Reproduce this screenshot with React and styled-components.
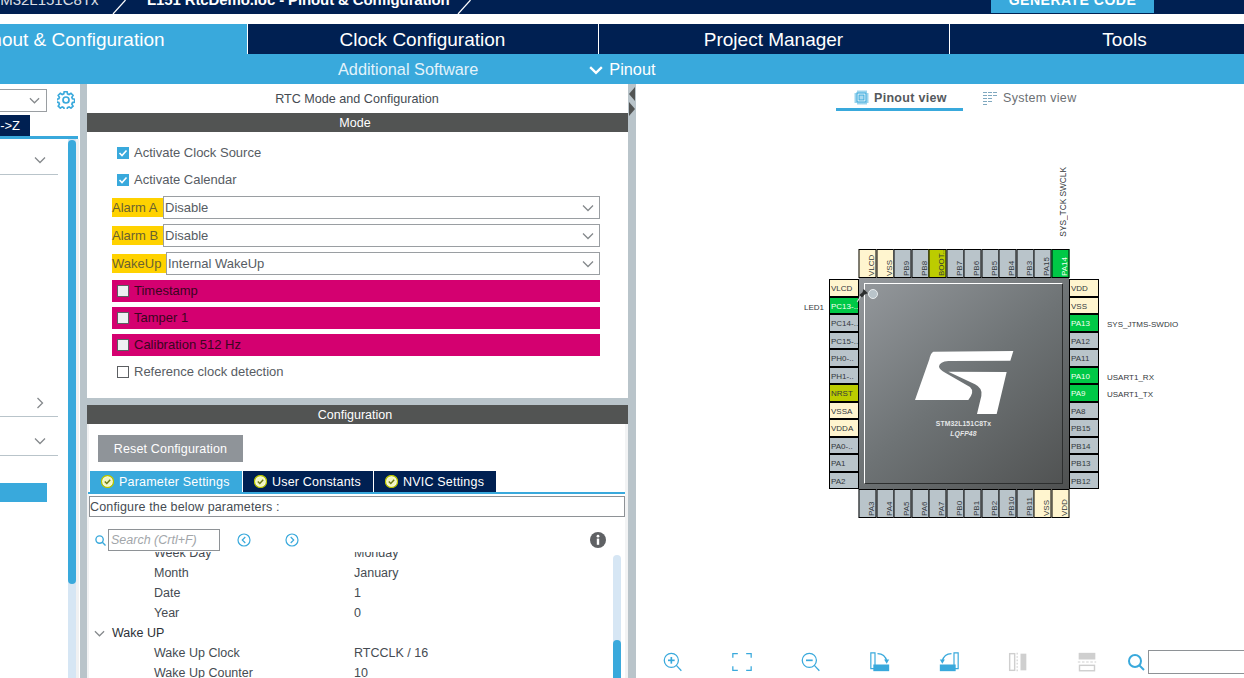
import React from 'react';
import styled, { createGlobalStyle } from 'styled-components';

const NAVY = '#002052';
const BLUE = '#39a9dc';
const GUTTER = '#b9c4ca';
const DARK = '#525453';

const Global = createGlobalStyle`
  html, body { margin: 0; padding: 0; background: #fff; }
  body { font-family: "Liberation Sans", Arial, sans-serif; color: #454b52; }
  * { box-sizing: border-box; }
`;

const Page = styled.div`
  width: 1244px; height: 678px; overflow: hidden; display: flex; flex-direction: column;
`;

/* ---------- header ---------- */
const TopBar = styled.div`
  height: 14px; flex: none; background: ${NAVY}; display: flex; overflow: hidden; position: relative;
`;
const Crumb = styled.div`
  flex: none; width: ${p => p.$w}px; margin-left: ${p => p.$ml || 0}px;
  margin-top: -9px; height: 23px; line-height: 17px; color: #fff; white-space: nowrap; font-size: 15px;
  font-weight: ${p => (p.$bold ? 700 : 400)}; opacity: ${p => (p.$bold ? 1 : 0.85)};
  letter-spacing: ${p => (p.$bold ? '-0.12px' : '0')};
`;
const CrumbSlash = styled.svg`
  flex: none; width: 16px; height: 14px; display: block; margin-left: ${p => p.$ml}px;
`;
const Generate = styled.div`
  position: absolute; left: 991px; top: -9px; width: 163px; height: 22px; background: ${BLUE}; color: #fff;
  font-size: 14px; font-weight: 700; text-align: center; line-height: 18px; letter-spacing: 0.5px;
`;
const Spacer = styled.div`
  height: 10px; flex: none; background: #fff;
`;
const Tabs = styled.div`
  height: 30px; flex: none; display: flex; margin-left: -103px; width: 1452px;
`;
const Tab = styled.div`
  flex: none; width: 351px; height: 30px; background: ${p => (p.$active ? BLUE : NAVY)}; color: #fff;
  border-right: 1px solid #fff; font-size: 19px; line-height: 31px; text-align: center; padding-right: ${p => (p.$active ? 5 : 1)}px;
`;
const SubBar = styled.div`
  height: 30px; flex: none; background: ${BLUE}; display: flex; align-items: center;
  padding: 1px 0 0 338px; font-size: 16.3px; gap: 111px;
`;
const SubItem = styled.div`
  display: flex; align-items: center; gap: 6px; color: ${p => (p.$on ? '#fff' : '#e3f3fb')};
`;

/* ---------- body ---------- */
const Main = styled.div`
  flex: 1; min-height: 0; display: flex;
`;
const LeftPanel = styled.div`
  flex: none; width: 80px; position: relative; display: flex; flex-direction: column; background: #fff; overflow: hidden;
`;
const LeftTop = styled.div`
  display: flex; align-items: center; height: 31px; padding-top: 1px;
`;
const MiniSelect = styled.div`
  width: 47px; height: 23px; border: 1px solid #9a9ea2; border-left: none; display: flex; align-items: center;
  justify-content: flex-end; padding-right: 6px;
`;
const Gear = styled.svg`
  width: 18px; height: 18px; margin-left: 10px; flex: none;
`;
const SortBtn = styled.div`
  width: 30px; height: 21px; background: ${NAVY}; color: #fff; font-size: 13px; line-height: 21px; text-align: right; padding-right: 10px;
`;
const BlueLine = styled.div`
  height: 3px; width: 78px; background: ${BLUE}; flex: none;
`;
const LeftList = styled.div`
  flex: 1; display: flex; min-height: 0;
`;
const Cats = styled.div`
  width: 58px; flex: none; display: flex; flex-direction: column;
`;
const Cat = styled.div`
  height: ${p => p.$h}px; flex: none; border-bottom: 1px solid ${GUTTER}; display: flex;
  align-items: flex-end; justify-content: flex-end; padding: 0 12px ${p => p.$pb || 8}px 0;
`;
const SoftBar = styled.div`
  width: 47px; height: 19px; background: ${BLUE}; margin-top: 27px; flex: none;
`;
const Scroll = styled.div`
  width: 11px; flex: none; margin-left: 10px; background: #d6e6f4; border-right: 3px solid #f0f1f2; position: relative;
`;
const ScrollThumb = styled.div`
  position: absolute; left: 0; right: 0; top: ${p => p.$top}px; height: ${p => p.$h}px; background: ${BLUE}; border-radius: 4px;
`;
const Gutter = styled.div`
  flex: none; width: ${p => p.$w}px; background: ${GUTTER}; position: relative;
`;
const HandleMark = styled.div`
  position: absolute; left: 1px; top: ${p => p.$top}px; width: 0; height: 0;
  border-top: 7px solid transparent; border-bottom: 7px solid transparent;
  ${p => (p.$right ? 'border-left: 6px solid #525453;' : 'border-right: 6px solid #525453;')}
`;
const Center = styled.div`
  flex: none; width: 541px; display: flex; flex-direction: column; background: #fff;
`;
const PanelTitle = styled.div`
  height: 29px; line-height: 30px; text-align: center; font-size: 12.6px; color: #454b52; padding-right: 1px;
`;
const Band = styled.div`
  height: 19px; background: ${DARK}; color: #fff; line-height: 20px; text-align: center; font-size: 12.5px; flex: none; padding-right: 5px;
`;
const ModeBody = styled.div`
  height: 266px; flex: none; padding: 7px 28px 0 25px; display: flex; flex-direction: column;
`;
const CheckRow = styled.div`
  height: 27px; flex: none; display: flex; align-items: center; padding-left: 5px; gap: 5px; font-size: 13px; color: #575c63;
  margin-top: ${p => p.$mt || 0}px;
`;
const Box = styled.span`
  width: 12px; height: 12px; flex: none; display: flex; align-items: center; justify-content: center;
  background: ${p => (p.$on ? BLUE : p.$light ? '#eef0f3' : '#fff')};
  border: ${p => (p.$on ? 'none' : '1px solid #5c5f62')};
`;
const SelectRow = styled.div`
  height: 23px; flex: none; display: flex; align-items: center; margin-top: ${p => p.$mt || 5}px; font-size: 13px;
`;
const Warn = styled.div`
  flex: none; height: 19px; line-height: 19px; background: #ffd200; color: #6b6230; width: ${p => p.$w}px; white-space: nowrap;
`;
const Select = styled.div`
  flex: 1; height: 23px; border: 1px solid #9a9ea2; display: flex; align-items: center; padding: 0 5px 0 1px; justify-content: space-between; color: #575c63;
`;
const ErrRow = styled.div`
  height: 22px; flex: none; margin-top: 5px; background: #d40070; color: #3a0620; display: flex; align-items: center;
  padding-left: 5px; gap: 5px; font-size: 13px;
`;
const ErrLabel = styled.span`
  line-height: 15px; margin-top: -2px;
`;
const GapRow = styled.div`
  height: 7px; flex: none; background: ${GUTTER};
`;
const Config = styled.div`
  flex: 1; min-height: 0; display: flex; flex-direction: column; border-left: 2px solid #f2f3f4; border-right: 3px solid #f2f3f4;
`;
const ConfigBand = styled(Band)`
  margin: 0 -3px 0 -2px;
`;
const Reset = styled.div`
  width: 145px; height: 27px; margin: 11px 0 0 9px; background: #8f9499; color: #fff; text-align: center; line-height: 28px; font-size: 12.5px; letter-spacing: 0.15px;
`;
const SubTabs = styled.div`
  display: flex; height: 21px; margin: 9px 0 0 1px; flex: none; gap: 1px;
`;
const SubTab = styled.div`
  width: ${p => p.$w}px; height: 21px; background: ${p => (p.$active ? BLUE : NAVY)}; color: #fff; font-size: 12.5px; letter-spacing: 0.2px;
  display: flex; align-items: center; gap: 5px; padding-left: 11px; flex: none;
`;
const OkDot = styled.svg`
  width: 13px; height: 13px; flex: none;
`;
const SubLine = styled.div`
  height: 2px; background: ${BLUE}; flex: none; margin-left: -1px;
`;
const ParamBox = styled.div`
  height: 21px; margin: 2px 0 0 0; width: 536px; border: 1px solid #8e9296; font-size: 12.5px; letter-spacing: 0.15px; line-height: 20px; color: #454b52; flex: none;
`;
const SearchRow = styled.div`
  height: 22px; display: flex; align-items: center; margin-top: 12px; padding-left: 6px; flex: none; position: relative;
`;
const SearchInput = styled.div`
  width: 112px; height: 22px; margin-left: 2px; border: 1px solid #8e9296; color: #a2a6aa; font-style: italic; font-size: 12.5px; line-height: 20px; padding-left: 2px; white-space: nowrap;
`;
const RoundBtn = styled.svg`
  width: 14px; height: 14px; flex: none; margin-left: ${p => p.$ml}px;
`;
const Info = styled.svg`
  width: 16px; height: 16px; margin-left: 291px; flex: none;
`;
const ParamArea = styled.div`
  flex: 1; min-height: 0; position: relative; overflow: hidden; margin-top: 1px;
`;
const ParamRow = styled.div`
  height: 20px; line-height: 20px; display: flex; font-size: 12.5px; color: #454b52; padding-left: ${p => (p.$head ? 5 : 65)}px; align-items: center;
  margin-top: ${p => p.$mt || 0}px;
`;
const ParamName = styled.div`
  width: ${p => (p.$head ? 'auto' : '200px')}; flex: none; display: flex; align-items: center; gap: 7px; color: ${p => (p.$head ? '#2c3036' : '#454b52')};
`;
const PScroll = styled.div`
  position: absolute; left: 524px; top: 3px; bottom: 0; width: 8px; background: #d6e6f4; border-radius: 4px 4px 0 0;
`;
const PThumb = styled.div`
  position: absolute; left: 0; right: 0; top: 85px; bottom: 0; background: ${BLUE}; border-radius: 4px 4px 0 0;
`;

/* ---------- right ---------- */
const Right = styled.div`
  flex: 1; min-width: 0; display: flex; flex-direction: column; position: relative; overflow: hidden;
`;
const ViewTabs = styled.div`
  display: flex; height: 27px; flex: none; margin-left: 200px;
`;
const ViewTab = styled.div`
  width: ${p => p.$w}px; height: 27px; flex: none; display: flex; align-items: center; gap: 5px; padding-left: ${p => p.$pl}px;
  padding-top: ${p => (p.$on ? 3 : 1)}px;
  border-bottom: ${p => (p.$on ? `3px solid ${BLUE}` : 'none')}; font-size: 12.5px; font-weight: ${p => (p.$on ? 700 : 400)}; color: ${p => (p.$on ? '#55595d' : '#6c7074')}; letter-spacing: 0.3px;
`;
const ViewIcon = styled.svg`
  width: 15px; height: 15px; flex: none;
`;
const Chip = styled.div`
  display: grid; grid-template-columns: 30px 210px 30px; grid-template-rows: 29px 211px 29px; margin: 138px 0 0 193px; width: 270px; flex: none;
`;
const PinRow = styled.div`
  grid-column: 2; display: flex; grid-row: ${p => p.$row};
`;
const PinCol = styled.div`
  grid-row: 2; grid-column: ${p => p.$col}; display: flex; flex-direction: column; padding-top: 1px;
`;
const pinColors = { g: ['#b9c4ca', '#33383c'], y: ['#fff5cf', '#33383c'], e: ['#00c846', '#f4fff4'], o: ['#bccc00', '#33383c'] };
const VPin = styled.div`
  flex: none; width: 17.5px; height: 29px; border: 1px solid #000; background: ${p => pinColors[p.$c][0]}; color: ${p => pinColors[p.$c][1]};
  font-size: 8px; writing-mode: vertical-rl; transform: rotate(180deg); white-space: nowrap; overflow: hidden; line-height: 15px; padding: 1px 3px 0 0; position: relative;
`;
const VPinWrap = styled.div`
  flex: none; width: 17.5px; height: 29px; position: relative;
`;
const HPin = styled.div`
  flex: none; width: 30px; height: 17.5px; border: 1px solid #000; background: ${p => pinColors[p.$c][0]}; color: ${p => pinColors[p.$c][1]};
  font-size: 8px; line-height: 18px; white-space: nowrap; overflow: hidden; padding-left: 1px;
`;
const HPinWrap = styled.div`
  flex: none; height: 17.5px; position: relative;
`;
const SignalH = styled.div`
  position: absolute; top: 5px; font-size: 8px; line-height: 12px; color: #33383c; white-space: nowrap;
  ${p => (p.$left ? 'right: 35px;' : 'left: 38px;')}
`;
const SignalV = styled.div`
  position: absolute; bottom: 41px; left: 5px; font-size: 8.3px; line-height: 12px; color: #33383c; white-space: nowrap; writing-mode: vertical-rl; transform: rotate(180deg);
`;
const Body = styled.div`
  grid-row: 2; grid-column: 2; background: linear-gradient(140deg, #95999d 0%, #6e7375 50%, #4f5151 100%); padding: 5px 6px 5px 5px; position: relative;
`;
const BodyInner = styled.div`
  height: 100%; border-left: 1px solid #fff; border-top: 1px solid #fff; border-right: 1px solid #2d2f2f; border-bottom: 1px solid #2d2f2f;
  display: flex; flex-direction: column; align-items: center; padding-top: 67px; color: #e4e6e7; font-size: 6.8px; font-weight: 700; letter-spacing: 0.1px;
`;
const Logo = styled.svg`
  width: 100px; height: 65px; flex: none; margin-left: 3px;
`;
const ChipName = styled.div`
  margin-top: 3px; line-height: 9px; white-space: nowrap;
`;
const ChipPkg = styled.div`
  margin-top: 1px; font-style: italic; line-height: 9px;
`;
const Dot = styled.div`
  position: absolute; left: 9px; top: 11px; width: 10px; height: 10px; border-radius: 50%; background: #b9c4ca; border: 1px solid #e8ecee;
`;
const Pushpin = styled.svg`
  position: absolute; left: -4px; top: 10px; width: 14px; height: 16px;
`;
const Toolbar = styled.div`
  margin-top: auto; height: 30px; flex: none; margin-bottom: 1px; display: flex; align-items: center; padding-left: 27px;
`;
const ToolIcon = styled.svg`
  width: 20px; height: 20px; flex: none; margin-right: ${p => p.$mr || 49}px;
`;
const SmallSearch = styled.svg`
  width: 18px; height: 18px; flex: none; margin-right: 3px;
`;
const ToolInput = styled.div`
  width: 100px; height: 24px; border: 1px solid #8e9296; flex: none;
`;

const Chev = ({ dir = 'down', size = 12, color = '#85898c', w = 1.3 }) => (
  <svg width={size} height={size} viewBox="0 0 12 12" style={{ flex: 'none', display: 'block' }}>
    <path d={dir === 'down' ? 'M1 3.5 L6 8.5 L11 3.5' : 'M3.5 1 L8.5 6 L3.5 11'} fill="none" stroke={color} strokeWidth={w} />
  </svg>
);
const Tick = () => (
  <svg width="10" height="10" viewBox="0 0 10 10"><path d="M1.5 5 L4 7.5 L8.5 2.5" fill="none" stroke="#fff" strokeWidth="1.6" /></svg>
);
const Ok = () => (
  <OkDot viewBox="0 0 13 13">
    <circle cx="6.5" cy="6.5" r="6" fill="#fff" stroke="#b7c400" strokeWidth="1.4" />
    <circle cx="6.5" cy="6.5" r="4.6" fill="#f2f6c2" />
    <path d="M3.8 6.5 L5.8 8.5 L9.2 4.8" fill="none" stroke="#6d7a12" strokeWidth="1.4" />
  </OkDot>
);
const Mag = ({ plus, minus }) => (
  <ToolIcon viewBox="0 0 24 24">
    <circle cx="10" cy="10" r="8.5" fill="none" stroke={BLUE} strokeWidth="1.5" />
    <path d="M16 16 L22 22.5" stroke={BLUE} strokeWidth="1.5" />
    {(plus || minus) && <path d="M6 10 H14" stroke={BLUE} strokeWidth="2" />}
    {plus && <path d="M10 6 V14" stroke={BLUE} strokeWidth="2" />}
  </ToolIcon>
);

const topPins = [['VLCD','y'],['VSS','y'],['PB9','g'],['PB8','g'],['BOOT..','o'],['PB7','g'],['PB6','g'],['PB5','g'],['PB4','g'],['PB3','g'],['PA15','g'],['PA14','e','SYS_TCK SWCLK']];
const botPins = [['PA3','g'],['PA4','g'],['PA5','g'],['PA6','g'],['PA7','g'],['PB0','g'],['PB1','g'],['PB2','g'],['PB10','g'],['PB11','g'],['VSS','y'],['VDD','y']];
const leftPins = [['VLCD','y'],['PC13-..','e','LED1'],['PC14-..','g'],['PC15-..','g'],['PH0-..','g'],['PH1-..','g'],['NRST','o'],['VSSA','y'],['VDDA','y'],['PA0-..','g'],['PA1','g'],['PA2','g']];
const rightPins = [['VDD','y'],['VSS','y'],['PA13','e','SYS_JTMS-SWDIO'],['PA12','g'],['PA11','g'],['PA10','e','USART1_RX'],['PA9','e','USART1_TX'],['PA8','g'],['PB15','g'],['PB14','g'],['PB13','g'],['PB12','g']];

export default function App() {
  return (
    <Page>
      <Global />
      <TopBar>
        <Crumb $w={118} $ml={-19}>STM32L151C8Tx</Crumb>
        <CrumbSlash $ml={13} viewBox="0 0 16 14"><path d="M1 14 L13.5 0" stroke="#fff" strokeWidth="1.2" /></CrumbSlash>
        <Crumb $w={303} $ml={19} $bold>L151 RtcDemo.ioc - Pinout &amp; Configuration</Crumb>
        <CrumbSlash $ml={7} viewBox="0 0 16 14"><path d="M1 14 L13.5 0" stroke="#fff" strokeWidth="1.2" /></CrumbSlash>
        <Generate>GENERATE CODE</Generate>
      </TopBar>
      <Spacer />
      <Tabs>
        <Tab $active>Pinout &amp; Configuration</Tab>
        <Tab>Clock Configuration</Tab>
        <Tab>Project Manager</Tab>
        <Tab>Tools</Tab>
      </Tabs>
      <SubBar>
        <SubItem>Additional Software</SubItem>
        <SubItem $on><Chev size={14} color="#fff" w={2} />Pinout</SubItem>
      </SubBar>
      <Main>
        <LeftPanel>
          <LeftTop>
            <MiniSelect><Chev size={11} /></MiniSelect>
            <Gear viewBox="0 0 24 24">
              <path d="M10 1.5 h4 l.6 3 2.2.9 2.6-1.7 2.9 2.9-1.7 2.6.9 2.2 3 .6 v4 l-3 .6-.9 2.2 1.7 2.6-2.9 2.9-2.6-1.7-2.2.9-.6 3 h-4 l-.6-3-2.2-.9-2.6 1.7-2.9-2.9 1.7-2.6-.9-2.2-3-.6 v-4 l3-.6.9-2.2-1.7-2.6 2.9-2.9 2.6 1.7 2.2-.9z" transform="translate(0 -.5) scale(.96)" fill="none" stroke={BLUE} strokeWidth="2.3" />
              <circle cx="12" cy="12" r="4" fill="none" stroke={BLUE} strokeWidth="2.3" />
            </Gear>
          </LeftTop>
          <SortBtn>-&gt;Z</SortBtn>
          <BlueLine />
          <LeftList>
            <Cats>
              <Cat $h={36}><Chev /></Cat>
              <Cat $h={242} $pb={7}><Chev dir="right" /></Cat>
              <Cat $h={39}><Chev /></Cat>
              <SoftBar />
            </Cats>
            <Scroll><ScrollThumb $top={1} $h={444} /></Scroll>
          </LeftList>
        </LeftPanel>
        <Gutter $w={7} />
        <Center>
          <PanelTitle>RTC Mode and Configuration</PanelTitle>
          <Band>Mode</Band>
          <ModeBody>
            <CheckRow><Box $on><Tick /></Box>Activate Clock Source</CheckRow>
            <CheckRow><Box $on><Tick /></Box>Activate Calendar</CheckRow>
            <SelectRow $mt={3}><Warn $w={51}>Alarm A</Warn><Select>Disable<Chev /></Select></SelectRow>
            <SelectRow><Warn $w={51}>Alarm B</Warn><Select>Disable<Chev /></Select></SelectRow>
            <SelectRow><Warn $w={54}>WakeUp</Warn><Select>Internal WakeUp<Chev /></Select></SelectRow>
            <ErrRow><Box $light /><ErrLabel>Timestamp</ErrLabel></ErrRow>
            <ErrRow><Box $light /><ErrLabel>Tamper 1</ErrLabel></ErrRow>
            <ErrRow><Box $light /><ErrLabel>Calibration 512 Hz</ErrLabel></ErrRow>
            <CheckRow $mt={2}><Box />Reference clock detection</CheckRow>
          </ModeBody>
          <GapRow />
          <Config>
            <ConfigBand>Configuration</ConfigBand>
            <Reset>Reset Configuration</Reset>
            <SubTabs>
              <SubTab $active $w={152}><Ok />Parameter Settings</SubTab>
              <SubTab $w={130}><Ok />User Constants</SubTab>
              <SubTab $w={122}><Ok />NVIC Settings</SubTab>
            </SubTabs>
            <SubLine />
            <ParamBox>Configure the below parameters :</ParamBox>
            <SearchRow>
              <svg width="11" height="11" viewBox="0 0 12 12" style={{ flex: 'none' }}>
                <circle cx="5" cy="5" r="4" fill="none" stroke={BLUE} strokeWidth="1.5" /><path d="M8 8 L11.5 11.5" stroke={BLUE} strokeWidth="1.5" />
              </svg>
              <SearchInput>Search (Crtl+F)</SearchInput>
              <RoundBtn $ml={17} viewBox="0 0 14 14"><circle cx="7" cy="7" r="6" fill="none" stroke={BLUE} strokeWidth="1.2" /><path d="M8.3 4 L5.3 7 L8.3 10" fill="none" stroke={BLUE} strokeWidth="1.2" /></RoundBtn>
              <RoundBtn $ml={34} viewBox="0 0 14 14"><circle cx="7" cy="7" r="6" fill="none" stroke={BLUE} strokeWidth="1.2" /><path d="M5.7 4 L8.7 7 L5.7 10" fill="none" stroke={BLUE} strokeWidth="1.2" /></RoundBtn>
              <Info viewBox="0 0 16 16"><circle cx="8" cy="8" r="8" fill="#5f6164" /><rect x="6.8" y="6.6" width="2.4" height="6.2" fill="#fff" /><circle cx="8" cy="4.2" r="1.4" fill="#fff" /></Info>
            </SearchRow>
            <ParamArea>
              <ParamRow $mt={-9}><ParamName>Week Day</ParamName>Monday</ParamRow>
              <ParamRow><ParamName>Month</ParamName>January</ParamRow>
              <ParamRow><ParamName>Date</ParamName>1</ParamRow>
              <ParamRow><ParamName>Year</ParamName>0</ParamRow>
              <ParamRow $head><ParamName $head><Chev size={11} />Wake UP</ParamName></ParamRow>
              <ParamRow><ParamName>Wake Up Clock</ParamName>RTCCLK / 16</ParamRow>
              <ParamRow><ParamName>Wake Up Counter</ParamName>10</ParamRow>
              <PScroll><PThumb /></PScroll>
            </ParamArea>
          </Config>
        </Center>
        <Gutter $w={8}>
          <HandleMark $top={3} />
          <HandleMark $top={18} $right />
        </Gutter>
        <Right>
          <ViewTabs>
            <ViewTab $on $w={127} $pl={18}>
              <ViewIcon viewBox="0 0 15 15">
                <rect x="3" y="3" width="9" height="9" fill="none" stroke={BLUE} strokeWidth="1.2" /><rect x="5" y="5" width="5" height="5" fill="#a9d9f0" stroke={BLUE} />
                <path d="M4 0.5V2.5M6 0.5V2.5M8 0.5V2.5M10 0.5V2.5M12 .5V2.5M4 12.5V14.5M6 12.5V14.5M8 12.5V14.5M10 12.5V14.5M12 12.5V14.5M.5 4H2.5M.5 6H2.5M.5 8H2.5M.5 10H2.5M.5 12H2.5M12.5 4H14.5M12.5 6H14.5M12.5 8H14.5M12.5 10H14.5M12.5 12H14.5" stroke={BLUE} strokeWidth="1" />
              </ViewIcon>
              Pinout view
            </ViewTab>
            <ViewTab $w={115} $pl={20}>
              <ViewIcon viewBox="0 0 15 15">
                <path d="M0 1.5H4M5 1.5H9M10 1.5H14M0 4.5H4M5 4.5H9M10 4.5H14M0 7.5H4M5 7.5H9M0 10.5H4M5 10.5H9M0 13.5H4" stroke="#7fa8bf" strokeWidth="1.2" />
              </ViewIcon>
              System view
            </ViewTab>
          </ViewTabs>
          <Chip>
            <PinRow $row={1}>
              {topPins.map(([n, c, s]) => (
                <VPinWrap key={n}>
                  {s && <SignalV>{s}</SignalV>}
                  <VPin $c={c}>{n}</VPin>
                </VPinWrap>
              ))}
            </PinRow>
            <PinCol $col={1}>
              {leftPins.map(([n, c, s]) => (
                <HPinWrap key={n}>
                  {s && <SignalH $left>{s}</SignalH>}
                  <HPin $c={c}>{n}</HPin>
                </HPinWrap>
              ))}
            </PinCol>
            <Body>
              <BodyInner>
                <Logo viewBox="0 0 300 195">
                  <path d="M55 2 L295 0 L286 29 L100 30 Q74 32 72 46 Q72 56 92 66 L165 108 Q180 122 160 147 L0 147 L43 25 Q47 6 55 2 Z" fill="#fff" />
                  <path d="M100 62 L275 63 L245 189 L186 189 L199 135 Q204 112 180 100 Z" fill="#fff" />
                </Logo>
                <ChipName>STM32L151C8Tx</ChipName>
                <ChipPkg>LQFP48</ChipPkg>
              </BodyInner>
              <Dot />
              <Pushpin viewBox="0 0 13 15">
                <path d="M8 1 L12 5 L9 6 L6.5 9 L4 6.5 L7 4 Z" fill="#2b2d2e" /><path d="M5 8 L2 13" stroke="#d8dadb" strokeWidth="1" />
              </Pushpin>
            </Body>
            <PinCol $col={3}>
              {rightPins.map(([n, c, s]) => (
                <HPinWrap key={n}>
                  <HPin $c={c}>{n}</HPin>
                  {s && <SignalH>{s}</SignalH>}
                </HPinWrap>
              ))}
            </PinCol>
            <PinRow $row={3}>
              {botPins.map(([n, c]) => (
                <VPinWrap key={n}><VPin $c={c}>{n}</VPin></VPinWrap>
              ))}
            </PinRow>
          </Chip>
          <Toolbar>
            <Mag plus />
            <ToolIcon viewBox="0 0 24 24"><path d="M1 7V2H7M17 2H23V7M23 17V22H17M7 22H1V17" fill="none" stroke={BLUE} strokeWidth="1.5" /></ToolIcon>
            <Mag minus />
            <ToolIcon viewBox="0 0 24 24"><path d="M5 20H1V1H6V20" fill="none" stroke={BLUE} strokeWidth="1.4" /><rect x="4" y="15" width="19" height="8" fill={BLUE} /><path d="M9 2 Q18 2 20 11" fill="none" stroke={BLUE} strokeWidth="1.6" /><path d="M17 9H23L20 14Z" fill={BLUE} /></ToolIcon>
            <ToolIcon viewBox="0 0 24 24"><path d="M19 20H23V1H18V20" fill="none" stroke={BLUE} strokeWidth="1.4" /><rect x="1" y="15" width="19" height="8" fill={BLUE} /><path d="M15 2 Q6 2 4 11" fill="none" stroke={BLUE} strokeWidth="1.6" /><path d="M1 9H7L4 14Z" fill={BLUE} /></ToolIcon>
            <ToolIcon viewBox="0 0 24 24"><rect x="2" y="2" width="6" height="20" fill="none" stroke="#cfcfcf" strokeWidth="1.7" /><path d="M11 1V23" stroke="#cfcfcf" strokeWidth="1.4" strokeDasharray="2 2" /><rect x="15" y="2" width="7" height="20" fill="#cfcfcf" /></ToolIcon>
            <ToolIcon $mr={30} viewBox="0 0 24 24"><rect x="2" y="1" width="20" height="8" fill="#cfcfcf" /><path d="M1 12H23" stroke="#cfcfcf" strokeWidth="1.4" strokeDasharray="3 2" /><rect x="3" y="16" width="18" height="6.5" fill="none" stroke="#cfcfcf" strokeWidth="1.7" /></ToolIcon>
            <SmallSearch viewBox="0 0 18 18"><circle cx="8" cy="8" r="6" fill="none" stroke={BLUE} strokeWidth="2" /><path d="M12.5 12.5 L17 17" stroke={BLUE} strokeWidth="2" /></SmallSearch>
            <ToolInput />
          </Toolbar>
        </Right>
      </Main>
    </Page>
  );
}
